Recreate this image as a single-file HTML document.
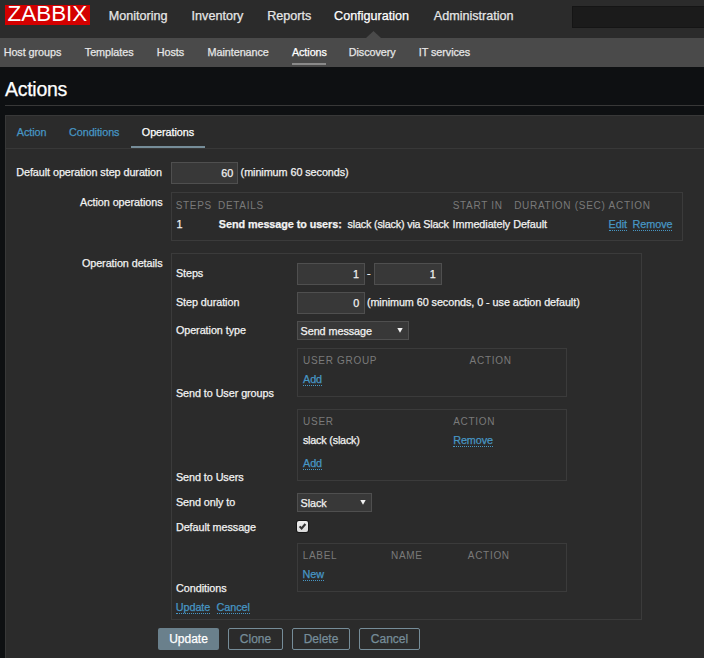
<!DOCTYPE html>
<html><head><meta charset="utf-8"><style>
html,body{margin:0;padding:0;width:704px;height:658px;overflow:hidden;background:#0e1012;}
.t{position:absolute;font-family:"Liberation Sans",sans-serif;white-space:pre;-webkit-text-stroke:0.25px currentColor;}
.lk{height:12px;border-bottom:1px dotted currentColor;}
</style></head><body>
<div style="position:absolute;left:0px;top:0px;width:704px;height:38px;box-sizing:border-box;background:#2b2b2b;"></div>
<div style="position:absolute;left:5px;top:5px;width:85px;height:20px;box-sizing:border-box;background:#d40000;"></div>
<div class="t" style="top:0.0px;font-size:22.4px;line-height:27px;left:7.6px;color:#fff;letter-spacing:0px;-webkit-text-stroke:0;">ZABBIX</div>
<div class="t" style="top:9px;font-size:12.6px;line-height:15px;left:108.8px;color:#e6e6e6;">Monitoring</div>
<div class="t" style="top:9px;font-size:12.6px;line-height:15px;left:191.6px;color:#e6e6e6;">Inventory</div>
<div class="t" style="top:9px;font-size:12.6px;line-height:15px;left:267.20000000000005px;color:#e6e6e6;">Reports</div>
<div class="t" style="top:9px;font-size:12.6px;line-height:15px;left:334.1px;color:#ffffff;">Configuration</div>
<div class="t" style="top:9px;font-size:12.6px;line-height:15px;left:433.8px;color:#e6e6e6;">Administration</div>
<div style="position:absolute;left:572px;top:6px;width:140px;height:22px;box-sizing:border-box;background:#1b1b1b;border:1px solid #151515;"></div>
<div style="position:absolute;left:0px;top:38px;width:704px;height:29px;box-sizing:border-box;background:#4a4a4a;"></div>
<svg style="position:absolute;left:366px;top:31px" width="15" height="7"><path d="M0 7L7.5 0L15 7Z" fill="#4a4a4a"/></svg>
<div class="t" style="top:46px;font-size:10.8px;line-height:13px;left:3.6999999999999997px;color:#e6e6e6;letter-spacing:-0.06px;">Host groups</div>
<div class="t" style="top:46px;font-size:10.8px;line-height:13px;left:84.8px;color:#e6e6e6;letter-spacing:-0.06px;">Templates</div>
<div class="t" style="top:46px;font-size:10.8px;line-height:13px;left:156.79999999999998px;color:#e6e6e6;letter-spacing:-0.06px;">Hosts</div>
<div class="t" style="top:46px;font-size:10.8px;line-height:13px;left:207.6px;color:#e6e6e6;letter-spacing:-0.06px;">Maintenance</div>
<div class="t" style="top:46px;font-size:10.8px;line-height:13px;left:291.90000000000003px;color:#ffffff;letter-spacing:-0.06px;">Actions</div>
<div class="t" style="top:46px;font-size:10.8px;line-height:13px;left:348.8px;color:#e6e6e6;letter-spacing:-0.06px;">Discovery</div>
<div class="t" style="top:46px;font-size:10.8px;line-height:13px;left:418.8px;color:#e6e6e6;letter-spacing:-0.06px;">IT services</div>
<div style="position:absolute;left:292px;top:63px;width:34px;height:2px;box-sizing:border-box;background:#8a8a8a;"></div>
<div style="position:absolute;left:0px;top:67px;width:704px;height:591px;box-sizing:border-box;background:#0e1012;"></div>
<div class="t" style="top:78px;font-size:19.5px;line-height:23px;left:4.8999999999999995px;color:#ffffff;letter-spacing:-0.25px;">Actions</div>
<div style="position:absolute;left:5px;top:105px;width:699px;height:1px;box-sizing:border-box;background:#383838;"></div>
<div style="position:absolute;left:5px;top:115px;width:720px;height:600px;box-sizing:border-box;background:#2b2b2b;border:1px solid #383838;"></div>
<div class="t" style="top:126px;font-size:10.8px;line-height:13px;left:16.8px;color:#4796c4;letter-spacing:-0.06px;">Action</div>
<div class="t" style="top:126px;font-size:10.8px;line-height:13px;left:69.0px;color:#4796c4;letter-spacing:-0.06px;">Conditions</div>
<div class="t" style="top:126px;font-size:10.8px;line-height:13px;left:141.79999999999998px;color:#ffffff;letter-spacing:-0.06px;">Operations</div>
<div style="position:absolute;left:6px;top:148px;width:698px;height:1px;box-sizing:border-box;background:#383838;"></div>
<div style="position:absolute;left:131px;top:146px;width:74px;height:2px;box-sizing:border-box;background:#768d99;"></div>
<div class="t" style="top:166px;font-size:10.8px;line-height:13px;right:542px;color:#f2f2f2;letter-spacing:-0.06px;">Default operation step duration</div>
<div style="position:absolute;left:171px;top:162px;width:67px;height:22px;box-sizing:border-box;background:#383838;border:1px solid #4f4f4f;"></div>
<div class="t" style="top:166.5px;font-size:10.8px;line-height:13px;right:470.8px;color:#f2f2f2;letter-spacing:-0.06px;">60</div>
<div class="t" style="top:166px;font-size:10.8px;line-height:13px;left:240.6px;color:#f2f2f2;letter-spacing:-0.06px;">(minimum 60 seconds)</div>
<div class="t" style="top:196px;font-size:10.8px;line-height:13px;right:541.5px;color:#f2f2f2;letter-spacing:-0.06px;">Action operations</div>
<div style="position:absolute;left:171px;top:192px;width:512px;height:49px;box-sizing:border-box;border:1px solid #3b3b3b;"></div>
<div class="t" style="top:200px;font-size:10px;line-height:12px;left:175.7px;color:#7a7a7a;letter-spacing:0.7px;-webkit-text-stroke:0;">STEPS</div>
<div class="t" style="top:200px;font-size:10px;line-height:12px;left:218.0px;color:#7a7a7a;letter-spacing:0.7px;-webkit-text-stroke:0;">DETAILS</div>
<div class="t" style="top:200px;font-size:10px;line-height:12px;left:452.70000000000005px;color:#7a7a7a;letter-spacing:0.7px;-webkit-text-stroke:0;">START IN</div>
<div class="t" style="top:200px;font-size:10px;line-height:12px;left:514.2px;color:#7a7a7a;letter-spacing:0.7px;-webkit-text-stroke:0;">DURATION (SEC)</div>
<div class="t" style="top:200px;font-size:10px;line-height:12px;left:608.6px;color:#7a7a7a;letter-spacing:0.7px;-webkit-text-stroke:0;">ACTION</div>
<div class="t" style="top:218px;font-size:10.8px;line-height:13px;left:176.6px;color:#f2f2f2;letter-spacing:-0.06px;">1</div>
<div class="t" style="top:218px;font-size:10.8px;line-height:13px;left:218.79999999999998px;color:#f2f2f2;font-weight:bold;letter-spacing:-0.06px;">Send message to users:</div>
<div class="t" style="top:218px;font-size:10.8px;line-height:13px;left:347.6px;color:#f2f2f2;letter-spacing:-0.2px;">slack (slack) via Slack</div>
<div class="t" style="top:218px;font-size:10.8px;line-height:13px;left:452.6px;color:#f2f2f2;letter-spacing:-0.06px;">Immediately</div>
<div class="t" style="top:218px;font-size:10.8px;line-height:13px;left:513.2px;color:#f2f2f2;letter-spacing:-0.06px;">Default</div>
<div class="t lk" style="top:218px;font-size:10.8px;line-height:13px;left:608.6px;color:#4796c4;letter-spacing:-0.06px;">Edit</div>
<div class="t lk" style="top:218px;font-size:10.8px;line-height:13px;left:632.6px;color:#4796c4;letter-spacing:-0.06px;">Remove</div>
<div class="t" style="top:257px;font-size:10.8px;line-height:13px;right:541.5px;color:#f2f2f2;letter-spacing:-0.06px;">Operation details</div>
<div style="position:absolute;left:171px;top:253px;width:471px;height:367px;box-sizing:border-box;border:1px solid #3b3b3b;"></div>
<div class="t" style="top:267px;font-size:10.8px;line-height:13px;left:175.9px;color:#f2f2f2;letter-spacing:-0.06px;">Steps</div>
<div style="position:absolute;left:297px;top:263px;width:68px;height:22px;box-sizing:border-box;background:#383838;border:1px solid #4f4f4f;"></div>
<div class="t" style="top:268px;font-size:10.8px;line-height:13px;right:345px;color:#f2f2f2;letter-spacing:-0.06px;">1</div>
<div class="t" style="top:267px;font-size:10.8px;line-height:13px;left:367.1px;color:#f2f2f2;letter-spacing:-0.06px;">-</div>
<div style="position:absolute;left:374px;top:263px;width:68px;height:22px;box-sizing:border-box;background:#383838;border:1px solid #4f4f4f;"></div>
<div class="t" style="top:268px;font-size:10.8px;line-height:13px;right:268.2px;color:#f2f2f2;letter-spacing:-0.06px;">1</div>
<div class="t" style="top:296px;font-size:10.8px;line-height:13px;left:175.9px;color:#f2f2f2;letter-spacing:-0.06px;">Step duration</div>
<div style="position:absolute;left:297px;top:292px;width:68px;height:22px;box-sizing:border-box;background:#383838;border:1px solid #4f4f4f;"></div>
<div class="t" style="top:297px;font-size:10.8px;line-height:13px;right:344.7px;color:#f2f2f2;letter-spacing:-0.06px;">0</div>
<div class="t" style="top:296px;font-size:10.8px;line-height:13px;left:366.90000000000003px;color:#f2f2f2;letter-spacing:-0.06px;">(minimum 60 seconds, 0 - use action default)</div>
<div class="t" style="top:324px;font-size:10.8px;line-height:13px;left:175.9px;color:#f2f2f2;letter-spacing:-0.06px;">Operation type</div>
<div style="position:absolute;left:297px;top:321px;width:112px;height:19px;box-sizing:border-box;background:#383838;border:1px solid #4f4f4f;"></div>
<div class="t" style="top:325px;font-size:10.8px;line-height:13px;left:300.6px;color:#f2f2f2;letter-spacing:-0.06px;">Send message</div>
<svg style="position:absolute;left:396.5px;top:328px" width="6" height="5"><path d="M0.3 0H5.7L3 4.8Z" fill="#f2f2f2"/></svg>
<div style="position:absolute;left:297px;top:348px;width:270px;height:49px;box-sizing:border-box;border:1px solid #3b3b3b;"></div>
<div class="t" style="top:355px;font-size:10px;line-height:12px;left:303.0px;color:#7a7a7a;letter-spacing:0.7px;-webkit-text-stroke:0;">USER GROUP</div>
<div class="t" style="top:355px;font-size:10px;line-height:12px;left:469.6px;color:#7a7a7a;letter-spacing:0.7px;-webkit-text-stroke:0;">ACTION</div>
<div class="t lk" style="top:372.5px;font-size:10.8px;line-height:13px;left:303.0px;color:#4796c4;letter-spacing:-0.06px;">Add</div>
<div class="t" style="top:387px;font-size:10.8px;line-height:13px;left:175.9px;color:#f2f2f2;letter-spacing:-0.06px;">Send to User groups</div>
<div style="position:absolute;left:297px;top:409px;width:270px;height:72px;box-sizing:border-box;border:1px solid #3b3b3b;"></div>
<div class="t" style="top:416px;font-size:10px;line-height:12px;left:303.1px;color:#7a7a7a;letter-spacing:0.7px;-webkit-text-stroke:0;">USER</div>
<div class="t" style="top:416px;font-size:10px;line-height:12px;left:453.20000000000005px;color:#7a7a7a;letter-spacing:0.7px;-webkit-text-stroke:0;">ACTION</div>
<div class="t" style="top:434px;font-size:10.8px;line-height:13px;left:302.90000000000003px;color:#f2f2f2;letter-spacing:-0.2px;">slack (slack)</div>
<div class="t lk" style="top:434px;font-size:10.8px;line-height:13px;left:453.20000000000005px;color:#4796c4;letter-spacing:-0.06px;">Remove</div>
<div class="t lk" style="top:456.5px;font-size:10.8px;line-height:13px;left:303.0px;color:#4796c4;letter-spacing:-0.06px;">Add</div>
<div class="t" style="top:471px;font-size:10.8px;line-height:13px;left:175.9px;color:#f2f2f2;letter-spacing:-0.06px;">Send to Users</div>
<div class="t" style="top:496px;font-size:10.8px;line-height:13px;left:175.9px;color:#f2f2f2;letter-spacing:-0.06px;">Send only to</div>
<div style="position:absolute;left:297px;top:493px;width:75px;height:19px;box-sizing:border-box;background:#383838;border:1px solid #4f4f4f;"></div>
<div class="t" style="top:497px;font-size:10.8px;line-height:13px;left:300.6px;color:#f2f2f2;letter-spacing:-0.06px;">Slack</div>
<svg style="position:absolute;left:359.5px;top:500px" width="6" height="5"><path d="M0.3 0H5.7L3 4.8Z" fill="#f2f2f2"/></svg>
<div class="t" style="top:521px;font-size:10.8px;line-height:13px;left:175.9px;color:#f2f2f2;letter-spacing:-0.06px;">Default message</div>
<div style="position:absolute;left:297px;top:521px;width:11px;height:11px;box-sizing:border-box;border-radius:2px;box-shadow:0 0 0 1px rgba(0,0,0,0.45);background:linear-gradient(#eeeeee,#d9d9d9);"></div>
<svg style="position:absolute;left:297px;top:521px" width="11" height="11"><path d="M2.6 5.4L4.6 7.5L8.4 3.0" stroke="#333" stroke-width="2.1" fill="none"/></svg>
<div style="position:absolute;left:297px;top:543px;width:270px;height:49px;box-sizing:border-box;border:1px solid #3b3b3b;"></div>
<div class="t" style="top:550px;font-size:10px;line-height:12px;left:302.70000000000005px;color:#7a7a7a;letter-spacing:0.7px;-webkit-text-stroke:0;">LABEL</div>
<div class="t" style="top:550px;font-size:10px;line-height:12px;left:391.0px;color:#7a7a7a;letter-spacing:0.7px;-webkit-text-stroke:0;">NAME</div>
<div class="t" style="top:550px;font-size:10px;line-height:12px;left:467.8px;color:#7a7a7a;letter-spacing:0.7px;-webkit-text-stroke:0;">ACTION</div>
<div class="t lk" style="top:568px;font-size:10.8px;line-height:13px;left:302.6px;color:#4796c4;letter-spacing:-0.06px;">New</div>
<div class="t" style="top:582px;font-size:10.8px;line-height:13px;left:176.1px;color:#f2f2f2;letter-spacing:-0.06px;">Conditions</div>
<div class="t lk" style="top:600.5px;font-size:10.8px;line-height:13px;left:175.79999999999998px;color:#4796c4;letter-spacing:-0.06px;">Update</div>
<div class="t lk" style="top:600.5px;font-size:10.8px;line-height:13px;left:216.6px;color:#4796c4;letter-spacing:-0.06px;">Cancel</div>
<div style="position:absolute;left:158px;top:628px;width:61px;height:22px;box-sizing:border-box;background:#6a808c;border-radius:2px;"></div>
<div class="t" style="left:158px;width:61px;top:632px;font-size:12px;line-height:14px;text-align:center;color:#fff">Update</div>
<div style="position:absolute;left:228px;top:628px;width:55px;height:22px;box-sizing:border-box;border:1px solid #768d99;border-radius:2px;"></div>
<div class="t" style="left:228px;width:55px;top:632px;font-size:12px;line-height:14px;text-align:center;color:#768d99">Clone</div>
<div style="position:absolute;left:292px;top:628px;width:58px;height:22px;box-sizing:border-box;border:1px solid #768d99;border-radius:2px;"></div>
<div class="t" style="left:292px;width:58px;top:632px;font-size:12px;line-height:14px;text-align:center;color:#768d99">Delete</div>
<div style="position:absolute;left:359px;top:628px;width:61px;height:22px;box-sizing:border-box;border:1px solid #768d99;border-radius:2px;"></div>
<div class="t" style="left:359px;width:61px;top:632px;font-size:12px;line-height:14px;text-align:center;color:#768d99">Cancel</div>
</body></html>
